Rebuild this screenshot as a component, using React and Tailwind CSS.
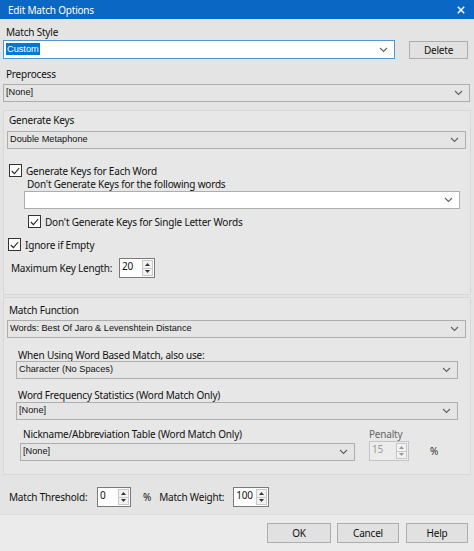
import React from 'react';

const ui = { fontFamily: '"Noto Sans", "Segoe UI", sans-serif', letterSpacing: '-0.2px' };
const list = { fontFamily: '"Liberation Sans", Arial, sans-serif', letterSpacing: '0px' };

const Chevron = () => (
  <svg width="9" height="6" viewBox="0 0 9 6" className="shrink-0">
    <path d="M1 1 L4.5 4.5 L8 1" fill="none" stroke="#606060" strokeWidth="1.1" />
  </svg>
);

const Combo = ({ text, className = '', white = false, focused = false, selected = false }) => (
  <div
    className={`flex items-center justify-between border pl-[2px] pr-[6px] ${
      white ? 'bg-white' : 'bg-[#e5e5e5]'
    } ${focused ? 'border-[#4f97d4]' : 'border-[#adadad]'} ${className}`}
  >
    <span style={list} className="text-[9.2px] leading-none text-[#111]">
      {selected ? <span className="bg-[#0078d7] px-[1px] py-[1px] text-white">{text}</span> : text}
    </span>
    <Chevron />
  </div>
);

const Check = ({ label, className = '' }) => (
  <div className={`flex h-[13px] items-center ${className}`}>
    <div className="flex h-[13px] w-[13px] shrink-0 items-center justify-center border border-[#333] bg-white">
      <svg width="9" height="8" viewBox="0 0 9 8">
        <path d="M0.8 4 L3.4 6.6 L8.2 1" fill="none" stroke="#222" strokeWidth="1.1" />
      </svg>
    </div>
    <span className="ml-[4px] whitespace-nowrap text-[10px] leading-none text-[#111]">{label}</span>
  </div>
);

const Spin = ({ value, className = '', disabled = false }) => (
  <div className={`flex border ${disabled ? 'border-[#c4c4c4] bg-[#ececec]' : 'border-[#7a7a7a] bg-white'} ${className}`}>
    <span
      className={`flex-1 pl-[2px] pt-[2px] text-[10px] leading-none ${disabled ? 'text-[#9a9a9a]' : 'text-[#111]'}`}
    >
      {value}
    </span>
    <div className="my-[1px] mr-[1px] flex w-[11px] flex-col border border-[#c8c8c8] bg-[#f2f2f2]">
      <div className="flex flex-1 items-center justify-center border-b border-[#c8c8c8]">
        <svg width="5" height="3" viewBox="0 0 5 3"><path d="M0 3 L2.5 0 L5 3 Z" fill={disabled ? '#999' : '#333'} /></svg>
      </div>
      <div className="flex flex-1 items-center justify-center">
        <svg width="5" height="3" viewBox="0 0 5 3"><path d="M0 0 L2.5 3 L5 0 Z" fill={disabled ? '#999' : '#333'} /></svg>
      </div>
    </div>
  </div>
);

const Button = ({ label, className = '' }) => (
  <div
    className={`flex items-center justify-center border border-[#adadad] bg-[#e1e1e1] text-[10px] text-[#111] ${className}`}
  >
    {label}
  </div>
);

const Label = ({ children, className = '' }) => (
  <div className={`h-[14px] whitespace-nowrap text-[10px] leading-[14px] ${className}`}>{children}</div>
);

export default function App() {
  return (
    <div style={ui} className="flex h-[551px] w-[474px] flex-col overflow-hidden bg-[#e4e4e4] text-[#111]">
      <div className="flex h-[19px] shrink-0 items-center justify-between bg-[#0b67c4] pl-[8px] pr-[9px]">
        <span className="text-[10px] leading-none text-white">Edit Match Options</span>
        <svg width="8" height="8" viewBox="0 0 8 8">
          <path d="M0.8 0.8 L7.2 7.2 M7.2 0.8 L0.8 7.2" stroke="#fff" strokeWidth="1.5" />
        </svg>
      </div>

      <Label className="ml-[6px] mt-[6px]">Match Style</Label>
      <div className="ml-[3px] mt-[1px] flex h-[19px]">
        <Combo text="Custom" white focused selected className="h-[19px] w-[392px]" />
        <Button label="Delete" className="ml-[14px] mt-[1px] h-[18px] w-[59px]" />
      </div>

      <Label className="ml-[6px] mt-[8px]">Preprocess</Label>
      <Combo text="[None]" className="ml-[3px] mt-[3px] h-[18px] w-[467px]" />

      <div className="ml-[3px] mt-[8px] flex h-[185px] w-[468px] flex-col border border-[#d8d8d8] bg-[#e7e7e7]">
        <Label className="ml-[5px] mt-[2px]">Generate Keys</Label>
        <Combo text="Double Metaphone" className="ml-[3px] mt-[4px] h-[18px] w-[459px]" />
        <Check label="Generate Keys for Each Word" className="ml-[5px] mt-[15px]" />
        <div className="ml-[23px] mt-[1px] h-[12px] whitespace-nowrap text-[10px] leading-[12px]">
          Don&apos;t Generate Keys for the following words
        </div>
        <Combo text="" white className="ml-[20px] mt-[1px] h-[18px] w-[436px]" />
        <Check label="Don't Generate Keys for Single Letter Words" className="ml-[24px] mt-[6px]" />
        <Check label="Ignore if Empty" className="ml-[4px] mt-[10px]" />
        <div className="mt-[7px] flex h-[20px] items-center">
          <span className="ml-[7px] w-[108px] whitespace-nowrap text-[10px] leading-none">Maximum Key Length:</span>
          <Spin value="20" className="h-[20px] w-[36px]" />
        </div>
      </div>

      <div className="ml-[3px] mt-[2px] flex h-[178px] w-[468px] flex-col border border-[#d8d8d8] bg-[#e7e7e7]">
        <Label className="ml-[5px] mt-[5px]">Match Function</Label>
        <Combo text="Words: Best Of Jaro & Levenshtein Distance" className="ml-[3px] mt-[3px] h-[18px] w-[459px]" />
        <Label className="ml-[14px] mt-[10px]">When Using Word Based Match, also use:</Label>
        <Combo text="Character (No Spaces)" className="ml-[12px] mt-[-1px] h-[18px] w-[442px]" />
        <Label className="ml-[14px] mt-[9px]">Word Frequency Statistics (Word Match Only)</Label>
        <Combo text="[None]" className="ml-[12px] h-[18px] w-[442px]" />
        <div className="mt-[7px] flex">
          <div className="flex flex-col">
            <Label className="ml-[19px]">Nickname/Abbreviation Table (Word Match Only)</Label>
            <Combo text="[None]" className="ml-[16px] mt-[2px] h-[18px] w-[335px]" />
          </div>
          <div className="ml-[14px] flex flex-col">
            <Label className="text-[#666]">Penalty</Label>
            <div className="flex items-center">
              <Spin value="15" disabled className="h-[20px] w-[40px]" />
              <span className="ml-[21px] text-[10px] text-[#333]">%</span>
            </div>
          </div>
        </div>
      </div>

      <div className="mt-[12px] flex h-[20px] items-center">
        <span className="ml-[9px] w-[88px] whitespace-nowrap text-[10px] leading-none">Match Threshold:</span>
        <Spin value="0" className="h-[20px] w-[34px]" />
        <span className="ml-[12px] text-[10px] leading-none">%</span>
        <span className="ml-[8px] w-[74px] whitespace-nowrap text-[10px] leading-none">Match Weight:</span>
        <Spin value="100" className="h-[20px] w-[36px]" />
      </div>

      <div className="mt-[7px] flex flex-1 items-start justify-end border-t border-[#dcdcdc] bg-[#ebebeb] pr-[6px] pt-[8px]">
        <Button label="OK" className="h-[20px] w-[64px]" />
        <Button label="Cancel" className="ml-[6px] h-[20px] w-[62px]" />
        <Button label="Help" className="ml-[7px] h-[20px] w-[62px]" />
      </div>
    </div>
  );
}
